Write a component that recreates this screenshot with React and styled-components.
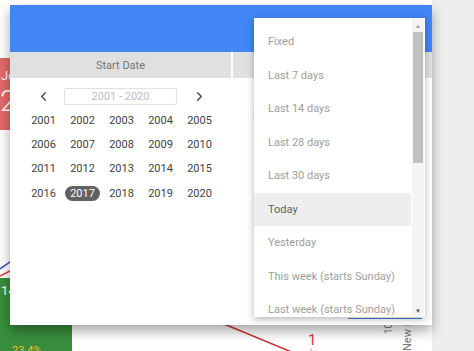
import React from "react";
import styled, { createGlobalStyle } from "styled-components";
import { ChevronLeft, ChevronRight } from "lucide-react";

const YEARS = Array.from({ length: 20 }, (_, i) => 2001 + i);
const SELECTED_YEAR = 2017;

const OPTIONS = [
  "Fixed",
  "Last 7 days",
  "Last 14 days",
  "Last 28 days",
  "Last 30 days",
  "Today",
  "Yesterday",
  "This week (starts Sunday)",
  "Last week (starts Sunday)",
];
const ACTIVE_OPTION = "Today";

const App = () => {
  return (
    <>
      <GlobalStyle />
      <Page>
        <Dashboard>
          <SideColumn>
            <RedCard>
              <CardLabel>Jo</CardLabel>
              <CardValue>2</CardValue>
            </RedCard>
            <MiniChart>
              <svg width="72" height="148" viewBox="0 0 72 148">
                <polyline
                  points="0,139 10,132 72,120"
                  fill="none"
                  stroke="#3949ab"
                  strokeWidth="1.5"
                />
                <polyline
                  points="0,146 10,141 72,136"
                  fill="none"
                  stroke="#e53935"
                  strokeWidth="1.5"
                />
              </svg>
            </MiniChart>
            <GreenCard>
              <CardLabel>14</CardLabel>
              <Percent>23.4%</Percent>
            </GreenCard>
          </SideColumn>
          <ChartArea>
            <svg width="360" height="351" viewBox="0 0 360 351">
              <line x1="140" y1="319" x2="222" y2="353" stroke="#d32f2f" strokeWidth="1.5" />
              <text x="236" y="345" fill="#e53935" fontSize="15" fontFamily="Roboto, sans-serif">
                1
              </text>
              <line x1="239" y1="348" x2="239" y2="351" stroke="#e0a0a0" strokeWidth="1" />
              <text
                x="0"
                y="0"
                fill="#757575"
                fontSize="10"
                fontFamily="Roboto, sans-serif"
                transform="translate(320 334) rotate(-90)"
              >
                10
              </text>
              <text
                x="0"
                y="0"
                fill="#757575"
                fontSize="11"
                fontFamily="Roboto, sans-serif"
                transform="translate(339 351) rotate(-90)"
              >
                New Lead
              </text>
            </svg>
          </ChartArea>
          <RightPanel />
        </Dashboard>

        <Dialog>
          <DialogHeader />
          <Tabs>
            <Tab>Start Date</Tab>
            <Tab>End Date</Tab>
          </Tabs>
          <DialogBody>
            <YearPicker>
              <YearNav>
                <NavArrow>
                  <ChevronLeft size={15} strokeWidth={2} />
                </NavArrow>
                <RangeBox>2001 - 2020</RangeBox>
                <NavArrow>
                  <ChevronRight size={15} strokeWidth={2} />
                </NavArrow>
              </YearNav>
              <YearGrid>
                {YEARS.map((year) => (
                  <YearCell key={year}>
                    <YearLabel $selected={year === SELECTED_YEAR}>{year}</YearLabel>
                  </YearCell>
                ))}
              </YearGrid>
            </YearPicker>
            <RangeColumn>
              <FieldLabel>s</FieldLabel>
              <SelectUnderline />
            </RangeColumn>
          </DialogBody>

          <Dropdown>
            <OptionList>
              {OPTIONS.map((option) => (
                <Option key={option} $active={option === ACTIVE_OPTION}>
                  {option}
                </Option>
              ))}
            </OptionList>
            <ScrollTrack>
              <ScrollArrow>▲</ScrollArrow>
              <ScrollThumb />
              <ScrollSpacer />
              <ScrollArrow $down>▼</ScrollArrow>
            </ScrollTrack>
          </Dropdown>
        </Dialog>
      </Page>
    </>
  );
};

export default App;

const GlobalStyle = createGlobalStyle`
  html, body {
    margin: 0;
    padding: 0;
    overflow: hidden;
  }
  body {
    font-family: Roboto, "Noto Sans", Arial, sans-serif;
    background: #ffffff;
  }
`;

const Page = styled.div`
  position: relative;
  width: 474px;
  height: 351px;
  overflow: hidden;
`;

const Dashboard = styled.div`
  display: grid;
  grid-template-columns: 72px 1fr 42px;
  height: 100%;
`;

const SideColumn = styled.div`
  display: flex;
  flex-direction: column;
  padding-top: 58px;
`;

const RedCard = styled.div`
  height: 72px;
  background: #e36a6a;
  color: #ffffff;
  display: flex;
  flex-direction: column;
  padding-top: 10px;
  box-sizing: border-box;
`;

const CardLabel = styled.div`
  font-size: 13px;
  line-height: 16px;
  color: #ffffff;
  padding-left: 1px;
`;

const CardValue = styled.div`
  font-size: 30px;
  line-height: 34px;
  font-weight: 300;
`;

const MiniChart = styled.div`
  height: 148px;
  display: flex;
`;

const GreenCard = styled.div`
  flex: 1;
  background: #388e3c;
  display: flex;
  flex-direction: column;
  justify-content: space-between;
  padding-top: 5px;
`;

const Percent = styled.div`
  font-size: 11px;
  line-height: 12px;
  color: #f2c12e;
  padding-left: 12px;
  margin-bottom: -6px;
`;

const ChartArea = styled.div`
  background: #ffffff;
  overflow: hidden;
`;

const RightPanel = styled.div`
  background: #eeeeee;
`;

const Dialog = styled.div`
  position: absolute;
  left: 10px;
  top: 5px;
  width: 422px;
  height: 320px;
  background: #ffffff;
  box-shadow: 0 6px 12px rgba(0, 0, 0, 0.35);
  display: flex;
  flex-direction: column;
`;

const DialogHeader = styled.div`
  height: 47px;
  background: #4285f4;
`;

const Tabs = styled.div`
  display: grid;
  grid-template-columns: 221px 1fr;
  column-gap: 2px;
  height: 26px;
  background: #ffffff;
`;

const Tab = styled.div`
  background: #e0e0e0;
  color: #757575;
  font-size: 11px;
  display: flex;
  align-items: center;
  justify-content: center;
`;

const DialogBody = styled.div`
  flex: 1;
  display: grid;
  grid-template-columns: 223px 1fr;
`;

const YearPicker = styled.div`
  padding: 10px 0 0 14px;
`;

const YearNav = styled.div`
  display: grid;
  grid-template-columns: repeat(5, 39px);
  height: 17px;
  align-items: center;
`;

const NavArrow = styled.div`
  display: flex;
  justify-content: center;
  align-items: center;
  color: #424242;
`;

const RangeBox = styled.div`
  grid-column: 2 / span 3;
  margin: 0 3px 0 1px;
  height: 17px;
  box-sizing: border-box;
  border: 1px solid #e0e0e0;
  border-radius: 2px;
  color: #bdbdbd;
  font-size: 11px;
  display: flex;
  align-items: center;
  justify-content: center;
`;

const YearGrid = styled.div`
  display: grid;
  grid-template-columns: repeat(5, 39px);
  grid-auto-rows: 24.4px;
  margin-top: 3px;
`;

const YearCell = styled.div`
  display: flex;
  align-items: center;
  justify-content: center;
`;

const YearLabel = styled.span`
  font-size: 11px;
  line-height: 15px;
  padding: 0 5.5px;
  border-radius: 8px;
  color: ${({ $selected }) => ($selected ? "#ffffff" : "#424242")};
  background: ${({ $selected }) => ($selected ? "#616161" : "transparent")};
`;

const RangeColumn = styled.div`
  display: flex;
  flex-direction: column;
  justify-content: space-between;
  align-items: flex-start;
  padding: 29px 10px 6px 20px;
`;

const FieldLabel = styled.div`
  font-size: 10px;
  color: #9e9e9e;
`;

const SelectUnderline = styled.div`
  align-self: flex-end;
  width: 74px;
  height: 1.5px;
  background: #4a7fe0;
`;

const Dropdown = styled.div`
  position: absolute;
  left: 244px;
  top: 13px;
  width: 171px;
  height: 299px;
  background: #ffffff;
  box-shadow: 0 2px 7px rgba(0, 0, 0, 0.3);
  display: flex;
  overflow: hidden;
`;

const OptionList = styled.div`
  width: 157px;
  padding-top: 7px;
  display: flex;
  flex-direction: column;
`;

const Option = styled.div`
  flex: none;
  height: 33.5px;
  padding-left: 14px;
  display: flex;
  align-items: center;
  font-size: 11px;
  color: ${({ $active }) => ($active ? "#616161" : "#9e9e9e")};
  background: ${({ $active }) => ($active ? "#eeeeee" : "transparent")};
  white-space: nowrap;
`;

const ScrollTrack = styled.div`
  width: 12px;
  margin-left: 1px;
  background: #f4f4f4;
  display: flex;
  flex-direction: column;
`;

const ScrollArrow = styled.div`
  height: 14px;
  display: flex;
  align-items: center;
  justify-content: center;
  font-size: 6px;
  color: ${({ $down }) => ($down ? "#505050" : "#a3a3a3")};
`;

const ScrollThumb = styled.div`
  height: 131px;
  margin: 0 1px;
  background: #c1c1c1;
`;

const ScrollSpacer = styled.div`
  flex: 1;
`;
